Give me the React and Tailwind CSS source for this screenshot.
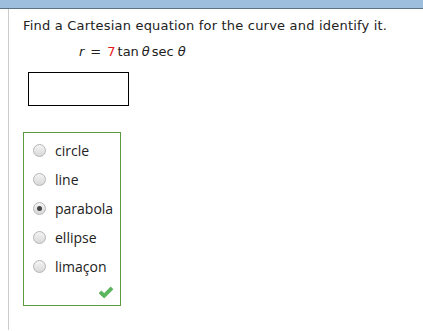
import React from "react";

const options = ["circle", "line", "parabola", "ellipse", "limaçon"];

const Radio = ({ checked }) => (
  <span className="flex h-[13px] w-[13px] shrink-0 items-center justify-center rounded-full border border-[#b5b5b5] bg-gradient-to-b from-[#f4f4f4] to-[#d9d9d9]">
    {checked && <span className="h-[5px] w-[5px] rounded-full bg-[#444]" />}
  </span>
);

export default function App() {
  return (
    <div className="h-[331px] w-[423px] overflow-hidden bg-white">
      <div className="h-[9px] border-b border-[#5d7185] bg-[#9dbfdd]" />
      <div className="ml-[8px] h-[321px] border-l border-[#cccccc] pl-[14px] pt-[9px]">
        <p className="font-['DejaVu_Sans',Verdana,sans-serif] text-[13px] leading-[16px] tracking-[0.2px] text-[#222]">
          Find a Cartesian equation for the curve and identify it.
        </p>
        <div className="mt-[10px] ml-[56px] flex items-baseline font-['DejaVu_Sans',Verdana,sans-serif] text-[13px] leading-[16px] text-[#222]">
          <span className="italic">r</span>
          <span className="mx-[6px]">=</span>
          <span className="text-[#e81818]">7</span>
          <span className="ml-[2px]">tan</span>
          <span className="ml-[3px] italic">θ</span>
          <span className="ml-[2px]">sec</span>
          <span className="ml-[4px] italic">θ</span>
        </div>
        <div className="mt-[12px] ml-[5px] h-[34px] w-[101px] border border-black bg-white" />
        <div className="mt-[26px] w-[98px] border border-[#5c9a3d] pb-[6px] pt-[3px] font-['Open_Sans',sans-serif] text-[14px] text-[#222]">
          {options.map((opt) => (
            <div key={opt} className="flex h-[29px] items-center pl-[9px]">
              <Radio checked={opt === "parabola"} />
              <span className="ml-[9px] leading-none">{opt}</span>
            </div>
          ))}
          <div className="mt-[5px] flex justify-end pr-[6px]">
            <svg width="16" height="13" viewBox="0 0 16 13">
              <path
                d="M1 7.2 L3.4 5 L6.2 7.6 L12.6 1 L15 3.3 L6.2 12 Z"
                fill="#5cb85c"
                stroke="#3f9a3f"
                strokeWidth="0.6"
              />
            </svg>
          </div>
        </div>
      </div>
    </div>
  );
}
